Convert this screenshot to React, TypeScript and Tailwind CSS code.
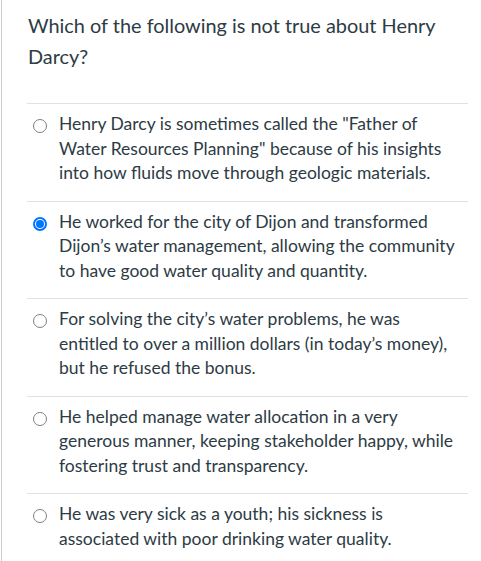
import React from 'react';

const options = [
  'Henry Darcy is sometimes called the "Father of Water Resources Planning" because of his insights into how fluids move through geologic materials.',
  'He worked for the city of Dijon and transformed Dijon\u2019s water management, allowing the community to have good water quality and quantity.',
  'For solving the city\u2019s water problems, he was entitled to over a million dollars (in today\u2019s money), but he refused the bonus.',
  'He helped manage water allocation in a very generous manner, keeping stakeholder happy, while fostering trust and transparency.',
  'He was very sick as a youth; his sickness is associated with poor drinking water quality.',
];

const App: React.FC = () => {
  const selected = 1;

  return (
    <div className="min-h-[561px] bg-white pl-px font-['Lato',sans-serif] text-[#2d3b45]">
      <div className="min-h-[561px] border-l border-[#c7cdd1] pl-[25px]">
        <div className="w-[441px]">
          <h2 className="pt-[10px] pb-[31px] pl-px text-[19.9px] leading-[31px]">
            Which of the following is not true about Henry Darcy?
          </h2>
          {options.map((text, i) => (
            <div
              key={i}
              role="radio"
              aria-checked={i === selected}
              className="flex items-start border-t border-[#dfe2e5] pt-[8px] pb-[15px]"
            >
              {i === selected ? (
                <span className="ml-[6px] mt-[7px] flex h-[14px] w-[14px] shrink-0 items-center justify-center rounded-full border-2 border-[#0075ff]">
                  <span className="h-[8px] w-[8px] rounded-full bg-[#0075ff]" />
                </span>
              ) : (
                <span className="ml-[6px] mt-[7px] h-[14px] w-[14px] shrink-0 rounded-full border-[1.5px] border-[#808080]" />
              )}
              <span className="ml-[12px] pr-[8px] text-[17.5px] leading-[24.5px]">{text}</span>
            </div>
          ))}
        </div>
      </div>
    </div>
  );
};

export default App;
